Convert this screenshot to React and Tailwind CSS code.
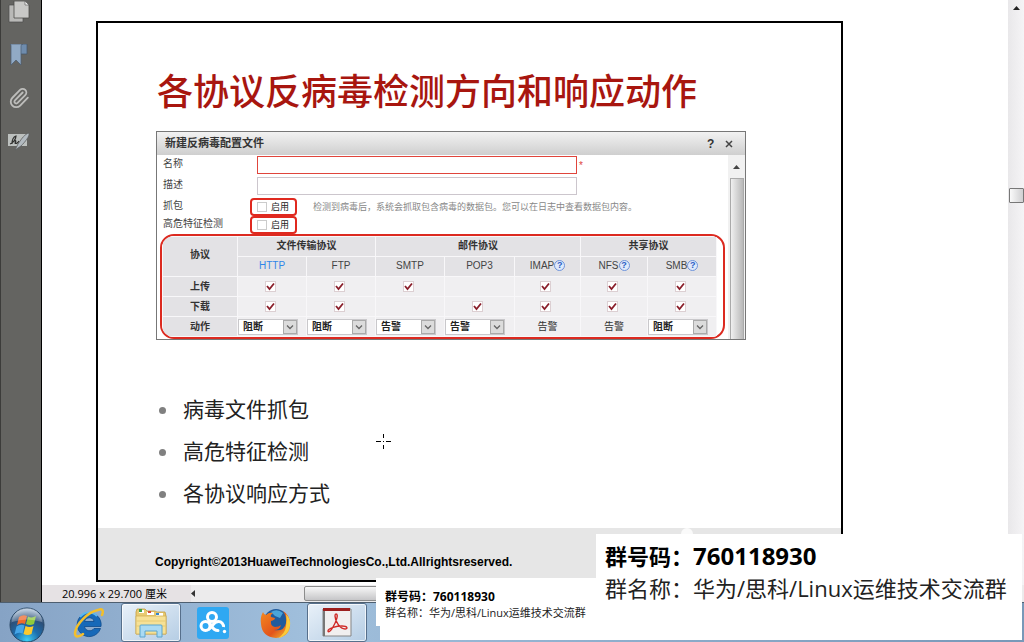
import { useState } from "react";
import { Paperclip } from "lucide-react";

const columns = ["HTTP", "FTP", "SMTP", "POP3", "IMAP", "NFS", "SMB"];
const withHelp = ["IMAP", "NFS", "SMB"];

const uploadDefaults = {
  HTTP: true,
  FTP: true,
  SMTP: true,
  IMAP: true,
  NFS: true,
  SMB: true,
};

const downloadDefaults = {
  HTTP: true,
  FTP: true,
  POP3: true,
  IMAP: true,
  NFS: true,
  SMB: true,
};

const actions = {
  HTTP: "阻断",
  FTP: "阻断",
  SMTP: "告警",
  POP3: "告警",
  IMAP: "告警",
  NFS: "告警",
  SMB: "阻断",
};

const fixedActions = ["IMAP", "NFS"];

const Tick = ({ label, checked, onChange }) => (
  <span className="inline-grid align-middle">
    <input
      type="checkbox"
      aria-label={label}
      checked={checked}
      onChange={onChange}
      className="col-start-1 row-start-1 h-[11px] w-[11px] appearance-none border border-[#dccfd2] bg-white"
    />
    {checked && (
      <svg
        className="pointer-events-none col-start-1 row-start-1 h-[11px] w-[11px]"
        viewBox="0 0 11 11"
        fill="none"
        stroke="#8a1f2b"
        strokeWidth="1.8"
      >
        <path d="M2 5l2.500 3L9 2.500" />
      </svg>
    )}
  </span>
);

const ActionSelect = ({ label, value }) => (
  <span className="relative flex h-4 w-[60px] border border-[#c9c8cb] bg-white">
    <select
      aria-label={label}
      defaultValue={value}
      className="w-full appearance-none bg-transparent pl-1 text-[10px] leading-[14px] font-bold text-[#222]"
    >
      <option>阻断</option>
      <option>告警</option>
    </select>
    <svg
      className="pointer-events-none absolute top-0 right-0 h-[14px] w-[14px]"
      viewBox="0 0 14 14"
      fill="none"
    >
      <rect x=".5" y=".5" width="13" height="13" fill="#dcdcdc" stroke="#aaa" />
      <path d="M4 5.5l3 3 3-3" stroke="#666" strokeWidth="1.3" />
    </svg>
  </span>
);

const CheckRow = ({ title, defaults }) => {
  const [checked, setChecked] = useState(defaults);

  return (
    <tr className="h-5">
      <th className="border border-[#f8f7f9] bg-[#e3e2e5] text-center">
        {title}
      </th>
      {columns.map((name) => (
        <td
          key={name}
          className="border border-[#f8f7f9] bg-[#f0eff1] p-0 pr-1 text-center leading-none"
        >
          {name in checked && (
            <Tick
              label={`${title} ${name}`}
              checked={checked[name]}
              onChange={() =>
                setChecked((prev) => ({ ...prev, [name]: !prev[name] }))
              }
            />
          )}
        </td>
      ))}
    </tr>
  );
};

const ProtocolTable = () => (
  <div className="mr-[3px] ml-[3px] overflow-hidden rounded-[14px] border-2 border-[#dc2a20] bg-white pr-[6px]">
    <table className="w-full table-fixed border-collapse text-[10px] leading-[14px] text-[#333]">
      <colgroup>
        <col className="w-[75px]" />
        <col className="w-[69px]" />
        <col className="w-[69px]" />
        <col className="w-[69px]" />
        <col className="w-[70px]" />
        <col className="w-[66px]" />
        <col className="w-[67px]" />
        <col className="w-[69px]" />
      </colgroup>
      <thead className="bg-[#e3e2e5]">
        <tr className="h-5">
          <th rowSpan="2" className="border border-[#f8f7f9] p-0 pb-1">
            协议
          </th>
          <th colSpan="2" className="border border-[#f8f7f9] p-0 pb-[2px]">
            文件传输协议
          </th>
          <th colSpan="3" className="border border-[#f8f7f9] p-0 pb-[2px]">
            邮件协议
          </th>
          <th colSpan="2" className="border border-[#f8f7f9] p-0 pb-[2px]">
            共享协议
          </th>
        </tr>
        <tr className="h-5">
          {columns.map((name) => (
            <th
              key={name}
              className={`border border-[#f8f7f9] p-0 pb-[2px] font-medium ${
                name === "HTTP" ? "text-[#2f86e8]" : "text-[#444]"
              }`}
            >
              <span className="flex items-center justify-center">
                {name}
                {withHelp.includes(name) && (
                  <span className="flex h-[11px] w-[11px] items-center justify-center rounded-full border border-[#6d93da] bg-[#dfe8fa] text-[9px] leading-none font-bold text-[#2c5fc4]">
                    ?
                  </span>
                )}
              </span>
            </th>
          ))}
        </tr>
      </thead>
      <tbody>
        <CheckRow title="上传" defaults={uploadDefaults} />
        <CheckRow title="下载" defaults={downloadDefaults} />
        <tr className="h-5">
          <th className="border border-[#f8f7f9] bg-[#e3e2e5]">动作</th>
          {columns.map((name) => (
            <td
              key={name}
              className="border border-[#f8f7f9] bg-[#f0eff1] p-0 text-center"
            >
              {fixedActions.includes(name) ? (
                actions[name]
              ) : (
                <ActionSelect label={`动作 ${name}`} value={actions[name]} />
              )}
            </td>
          ))}
        </tr>
      </tbody>
    </table>
  </div>
);

const EnableBox = ({ id }) => (
  <span className="flex h-[18px] w-[47px] items-center gap-1 rounded-[4px] border-2 border-[#e0291f] pl-[5px]">
    <input
      id={id}
      type="checkbox"
      className="h-[10px] w-[10px] appearance-none border border-[#ccc] bg-white"
    />
    <span className="text-[9px] leading-none text-[#222]">启用</span>
  </span>
);

const ProfileDialog = () => (
  <section className="mt-4 mr-[95px] ml-[58px] border border-[#777] bg-white text-[10px] text-[#444]">
    <header className="flex h-[23px] items-center bg-linear-to-b from-[#f2f2f2] to-[#cfcfcf] pr-3 pl-2">
      <h2 className="flex-1 text-[11px] font-bold text-[#333]">
        新建反病毒配置文件
      </h2>
      <button className="w-[18px] text-left text-[12px] leading-4 font-bold text-[#333]">
        ?
      </button>
      <button aria-label="关闭">
        <svg className="h-2 w-2" viewBox="0 0 8 8" stroke="#444" strokeWidth="1.5">
          <path d="M1 1l6 6M7 1l-6 6" />
        </svg>
      </button>
    </header>
    <div className="flex">
      <div className="min-w-0 flex-1">
        <div className="flex h-5 items-center pl-[6px]">
          <label htmlFor="name" className="w-[94px] pb-[3px]">
            名称
          </label>
          <input
            id="name"
            className="mr-[2px] h-[18px] w-[320px] border border-[#e0453c] bg-white px-1 outline-none"
          />
          <span className="text-[#e0453c]">*</span>
        </div>
        <div className="flex h-[22px] items-center pl-[6px]">
          <label htmlFor="desc" className="w-[94px] pb-[3px]">
            描述
          </label>
          <input
            id="desc"
            className="h-[18px] w-[320px] border border-[#ccc6cd] bg-white px-1 outline-none"
          />
        </div>
        <div className="flex h-[19px] items-end pl-[6px]">
          <label htmlFor="capture" className="w-[87px] pb-[3px]">
            抓包
          </label>
          <EnableBox id="capture" />
          <span className="ml-4 pb-[2px] text-[9px] whitespace-nowrap text-[#888]">
            检测到病毒后，系统会抓取包含病毒的数据包。您可以在日志中查看数据包内容。
          </span>
        </div>
        <div className="flex h-[18px] items-end pl-[6px]">
          <label htmlFor="risk" className="w-[87px] pb-[3px]">
            高危特征检测
          </label>
          <EnableBox id="risk" />
        </div>
        <ProtocolTable />
      </div>
      <div className="flex w-[17px] flex-col items-center bg-[#f1f1f1]">
        <span className="flex h-[23px] items-center">
          <svg className="h-1 w-[7px]" viewBox="0 0 7 4">
            <path d="M0 4L3.5 0L7 4z" fill="#444" />
          </svg>
        </span>
        <span className="w-[14px] flex-1 border border-b-0 border-[#aaa] bg-linear-to-r from-[#f0f0f0] to-[#b9b9b9]" />
      </div>
    </div>
  </section>
);

const Slide = () => (
  <article className="mt-[21px] mr-[165px] mb-[3px] ml-[54px] flex min-w-0 flex-1 flex-col border-2 border-black bg-white pt-12">
    <h1 className="pl-[59px] text-[36px] leading-[44px] font-medium whitespace-nowrap text-[#a8160f]">
      各协议反病毒检测方向和响应动作
    </h1>
    <ProfileDialog />
    <ul className="mt-[49px] pl-[61px] text-[21px] leading-[42px] text-[#222]">
      {["病毒文件抓包", "高危特征检测", "各协议响应方式"].map((item) => (
        <li key={item} className="flex items-center gap-[17px]">
          <span className="h-[7px] w-[7px] rounded-full bg-[#808080]" />
          {item}
        </li>
      ))}
    </ul>
    <footer className="mt-auto flex h-[52px] items-center bg-[#e6e6e6] pt-4 pl-[57px] text-[12px] font-bold text-black">
      Copyright©2013HuaweiTechnologiesCo.,Ltd.Allrightsreserved.
    </footer>
  </article>
);

const Sidebar = () => (
  <nav className="flex w-[42px] flex-col items-center gap-[21px] border-r border-l border-r-black border-l-[#3c3c3a] bg-[#646461] pt-px pr-1">
    <button aria-label="页面">
      <svg className="h-[22px] w-[22px]" viewBox="0 0 22 22">
        <path d="M1 4h14v17H1z" fill="#b9b9b7" stroke="#4c4c4a" strokeWidth=".7" />
        <path d="M6 0h11l4 4v13H6z" fill="#c8c8c6" stroke="#4c4c4a" strokeWidth=".8" />
        <path d="M17 0v4h4z" fill="#eee" stroke="#555" strokeWidth=".6" />
      </svg>
    </button>
    <button aria-label="书签">
      <svg className="h-[22px] w-[22px]" viewBox="0 0 22 22">
        <path d="M12 0h7v10h-7z" fill="#6f8cad" stroke="#435468" strokeWidth=".7" />
        <path d="M2 0h13q-2 0-2 2v19l-5-5-5 5V2Q3 0 2 0z" fill="#91aac5" stroke="#4a5c70" strokeWidth=".7" />
      </svg>
    </button>
    <button aria-label="附件">
      <Paperclip className="h-[22px] w-[22px] text-[#bdbdbb]" strokeWidth={2} />
    </button>
    <button aria-label="签名">
      <svg className="h-[22px] w-[22px]" viewBox="0 0 22 22" fill="none">
        <path d="M0 4h19v12H0z" fill="#bcc0be" />
        <path
          d="M2 14c3-1 6-5 6-8-3 1-4 5-4 8M5 12c2-2 4-2 2 1 1 1 3 0 4-2"
          stroke="#30302f"
          strokeWidth="1.2"
        />
        <path d="M21 3c1 3-4 9-8 13l-6 4 3-6C14 8 17 4 21 3z" fill="#b3bbc1" stroke="#5a5d5e" strokeWidth=".8" />
      </svg>
    </button>
  </nav>
);

const StartOrb = () => (
  <svg className="h-9 w-9" viewBox="0 0 36 36">
    <defs>
      <radialGradient id="orb" cx=".5" cy=".95" r=".9">
        <stop offset="0" stopColor="#3fd0f5" />
        <stop offset=".4" stopColor="#1c6eae" />
        <stop offset=".75" stopColor="#2d4f78" />
        <stop offset="1" stopColor="#a7bdd4" />
      </radialGradient>
    </defs>
    <circle cx="18" cy="18" r="17" fill="url(#orb)" stroke="#284766" />
    <path d="M10 10q4-3 8-1l-2 8q-4-2-8 1z" fill="#ee6a2c" />
    <path d="M19 9.500q4 2 8-.5l-2 8q-4 2-8 0z" fill="#8fca3c" />
    <path d="M7.500 19.500q4-3 8-1l-2 8q-4-2-8 1z" fill="#45a5e8" />
    <path d="M16.500 19q4 2 8 0l-2 8q-4 2-8 0z" fill="#fbc92e" />
    <path d="M3 15a15 14 0 0 1 30 0q-15-5-30 0z" fill="#fff" opacity=".25" />
  </svg>
);

const IeIcon = () => (
  <svg className="h-8 w-8" viewBox="0 0 32 32" fill="none">
    <path
      d="M28 19.500H11.500c.5 5 7.500 5.500 9.500 2h6.500A12 12 0 1 1 28 19.500zM11.500 14.500h9.500c-.5-5-8.500-5-9.500 0z"
      fill="#1769b8"
      stroke="#0e4a8c"
      strokeWidth=".8"
      fillRule="evenodd"
    />
    <path d="M7 10a11 11 0 0 1 17-1" stroke="#5bb8ef" strokeWidth="2" />
    <path
      d="M29 8c2-5 0-7-4-5C15 5 3 17 2 26c0 5 4 4 8 1"
      stroke="#f3bf2c"
      strokeWidth="2.500"
      strokeLinecap="round"
    />
  </svg>
);

const FolderIcon = () => (
  <svg className="h-8 w-8" viewBox="0 0 32 32">
    <path d="M1 5l1-3h8l2 2h8l2 1h8l1 4v18H1z" fill="#e9cb72" stroke="#c39d41" strokeWidth=".8" />
    <path d="M4 3h5v3H4zM12 5h7v3h-7zM21 6h7v3h-7z" fill="#fff" />
    <path d="M4 2h3v3H4z" fill="#3ba34b" />
    <path d="M13 4h3v2h-3z" fill="#db4b35" />
    <path d="M21 6h3v2h-3z" fill="#3185d1" />
    <path d="M1 9h30v18H1z" fill="#f6e196" stroke="#cfac51" strokeWidth=".7" />
    <path d="M1 14h30M1 19h30" stroke="#e8cb73" />
    <path d="M5 30V19q0-1 1-1h20q1 0 1 1v11h-5v-6H10v6z" fill="#a9daf3" stroke="#5ba5ce" />
  </svg>
);

const BaiduIcon = () => (
  <svg className="h-8 w-8" viewBox="0 0 32 32" fill="none">
    <rect width="32" height="32" rx="3" fill="#2fa8f2" />
    <g stroke="#fff" strokeWidth="3">
      <circle cx="15" cy="10" r="4.500" />
      <circle cx="8.500" cy="19" r="4.500" />
      <path d="M11.500 22.500C16 20 16 14.500 21.500 14.500A5 5 0 0 1 26.500 20" />
      <path d="M12 15.500C15 18 15 23.500 21 23.500" strokeLinecap="round" />
    </g>
    <circle cx="27.500" cy="24.500" r="1.700" fill="#fff" />
  </svg>
);

const FirefoxIcon = () => (
  <svg className="h-8 w-8" viewBox="0 0 32 32">
    <defs>
      <linearGradient id="fox" x1="0" y1="0" x2="1" y2="1">
        <stop offset="0" stopColor="#f58a1f" />
        <stop offset=".6" stopColor="#e2541b" />
        <stop offset="1" stopColor="#f7c531" />
      </linearGradient>
    </defs>
    <circle cx="17" cy="14" r="12" fill="#205b9d" />
    <path d="M12 5q6-4 12 1l-3 5-5-2z" fill="#4aa4d9" />
    <path
      d="M4 5q1 3 3 3 3-3 7-2-3 2-2 4l4 1q0 2-4 3-1 5 4 6 4 0 6-2-1 5-7 5 10 2 12-7 1-6-3-12 7 4 7 13 0 13-14 14Q3 30 2 17 1 10 4 5z"
      fill="url(#fox)"
    />
    <path d="M27 7q5 5 4 12-2 10-12 12 7-4 8-12 1-6 0-12z" fill="#f9cb3a" />
  </svg>
);

const AcrobatIcon = () => (
  <svg className="h-8 w-8" viewBox="0 0 32 32" fill="none">
    <path d="M2 2h28v27H2z" fill="#f1efef" stroke="#858585" />
    <path d="M2 1h27v3H2z" fill="#9c1f1e" />
    <path d="M2 4h2v25H2z" fill="#777" />
    <path
      d="M15 7c3 0 0 8-3 13-2 4-5 6-5 4 0-3 9-5 14-5 6 0 6 3 3 3-5 0-10-8-10-13 0-1 0-2 1-2z"
      stroke="#cf2a27"
      strokeWidth="1.400"
    />
  </svg>
);

const apps = [
  { name: "Internet Explorer", Icon: IeIcon },
  { name: "资源管理器", Icon: FolderIcon, open: true },
  { name: "百度网盘", Icon: BaiduIcon },
  { name: "Firefox", Icon: FirefoxIcon },
  { name: "Adobe Reader", Icon: AcrobatIcon, open: true },
];

const Taskbar = () => (
  <footer className="flex h-10 gap-[2px] border-t border-[#4e5f70] bg-linear-to-r from-[#86a3c5] via-[#a0bfdc] via-30% to-[#7898b8]">
    <button aria-label="开始" className="mr-[3px] flex w-[54px] items-center justify-center pt-1">
      <StartOrb />
    </button>
    {apps.map(({ name, Icon, open }) => (
      <button
        key={name}
        aria-label={name}
        className={`flex w-[60px] items-center justify-center ${
          open
            ? "rounded-[3px] border border-[#566f8b] bg-linear-to-br from-[#e9f1f9] to-[#b5cde4] inset-ring inset-ring-white/70"
            : ""
        }`}
      >
        <Icon />
      </button>
    ))}
  </footer>
);

const StatusBar = () => (
  <div className="flex h-[17px] items-center bg-[#ecebec]">
    <span className="w-[149px] bg-[#e6e2e4] pl-5 font-['Open_Sans','Noto_Sans_CJK_SC',sans-serif] text-[11px] leading-[17px] text-black">
      20.996 x 29.700 厘米
    </span>
    <svg className="h-[7px] w-1" viewBox="0 0 4 7">
      <path d="M4 0v7L0 3.500z" fill="#333" />
    </svg>
    <span className="mr-4 ml-[109px] h-[15px] flex-1 rounded-[2px] border border-[#8c8c8c] bg-linear-to-b from-[#f7f7f7] to-[#c6c6c8]" />
  </div>
);

const ViewScrollbar = () => (
  <div className="flex w-4 flex-col items-center bg-linear-to-r from-[#e9e8ea] to-[#f5f4f6] pt-[6px]">
    <svg className="h-1 w-[7px]" viewBox="0 0 7 4">
      <path d="M0 4L3.500 0L7 4z" fill="#222" />
    </svg>
    <span className="mt-[178px] h-[15px] w-[15px] rounded-[1px] border border-[#777] bg-linear-to-r from-[#fafafa] to-[#cfcfd1]" />
  </div>
);

export default function App() {
  return (
    <div className="relative flex min-h-screen flex-col overflow-hidden bg-white font-['Liberation_Sans','Noto_Sans_CJK_SC',sans-serif]">
      <div className="flex flex-1">
        <Sidebar />
        <div className="flex min-w-0 flex-1 flex-col">
          <div className="flex flex-1">
            <main className="flex min-w-0 flex-1">
              <Slide />
            </main>
            <ViewScrollbar />
          </div>
          <StatusBar />
        </div>
      </div>
      <Taskbar />

      {/* crosshair pointer */}
      <svg
        className="pointer-events-none absolute top-[434px] left-[376px] h-[15px] w-[15px]"
        viewBox="0 0 15 15"
        stroke="#000"
        shapeRendering="crispEdges"
      >
        <path d="M7.500 0v4M7.500 11v4M0 7.500h5M10 7.500h5M7 7.500h1" />
      </svg>

      {/* group banners */}
      <div className="absolute bottom-4 left-[376px] h-12 w-[224px] bg-white pt-[11px] pl-[9px] font-['Open_Sans','Noto_Sans_CJK_SC',sans-serif] whitespace-nowrap text-[#222]">
        <p className="text-[12px] leading-4 font-bold text-black">
          群号码：760118930
        </p>
        <p className="text-[11px] leading-4">
          群名称：华为/思科/Linux运维技术交流群
        </p>
      </div>
      <div className="absolute right-[2px] bottom-[2px] left-[380px] h-[14px] bg-white" />
      <div className="absolute bottom-[106px] left-[681px] h-2 w-3 rounded-t-full bg-white/80" />
      <div className="absolute right-[2px] bottom-[2px] left-[596px] h-[106px] bg-white pt-[6px] pl-[9px] font-['Open_Sans','Noto_Sans_CJK_SC',sans-serif] whitespace-nowrap text-[#222]">
        <p className="text-[22px] leading-8 font-bold text-black">
          群号码：<span className="text-[24px]">760118930</span>
        </p>
        <p className="text-[22px] leading-8">
          群名称：华为/思科/Linux运维技术交流群
        </p>
      </div>
    </div>
  );
}
